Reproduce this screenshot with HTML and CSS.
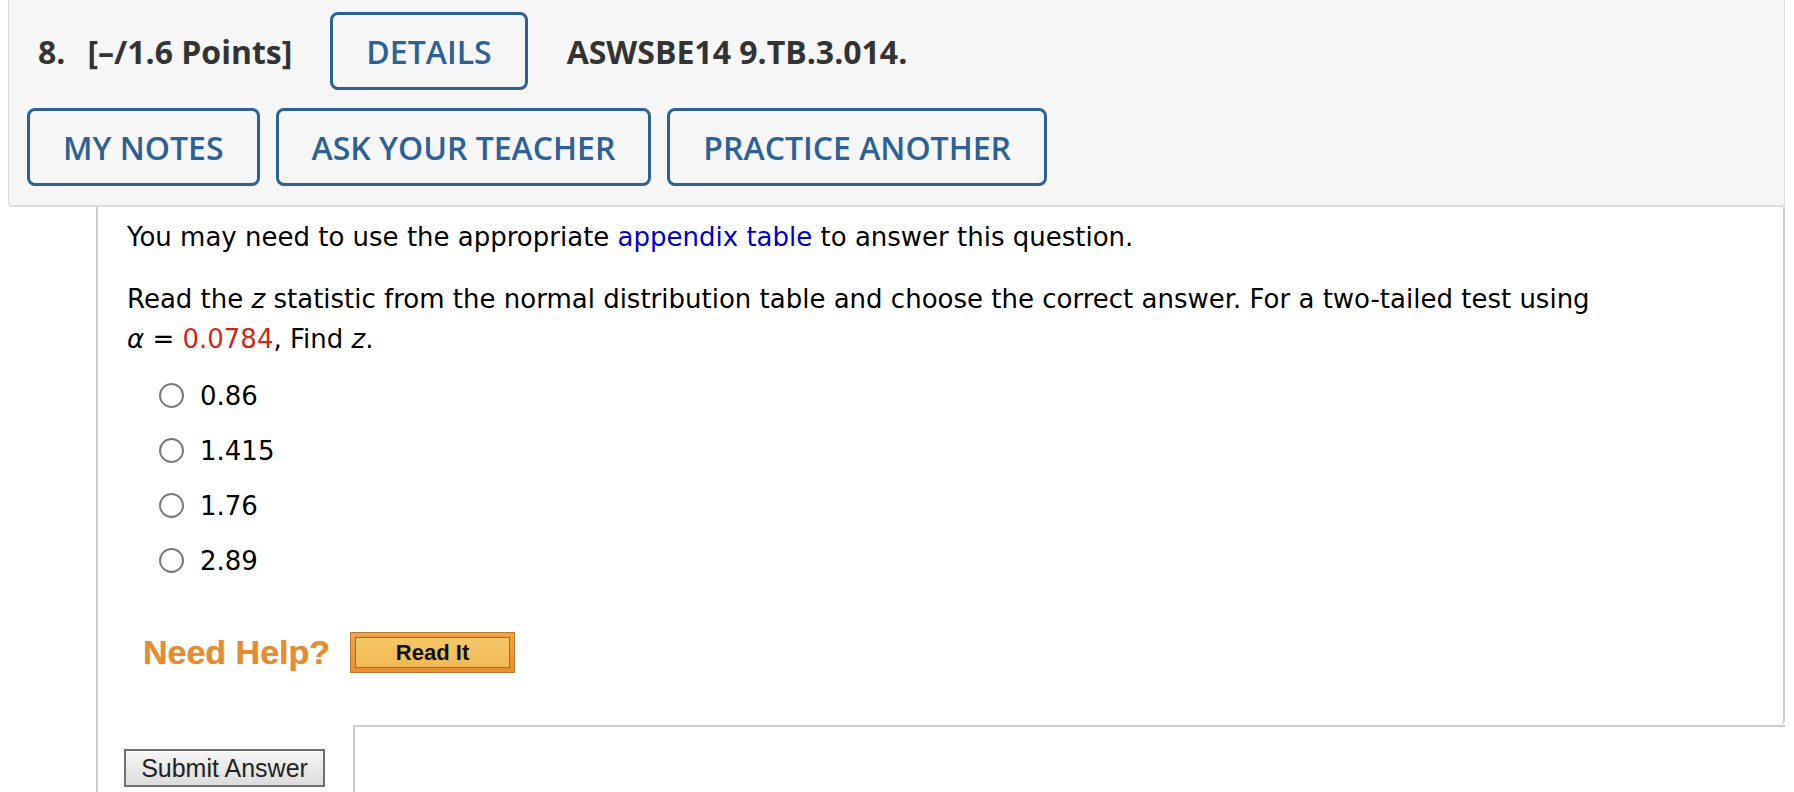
FILE: index.html
```html
<!DOCTYPE html>
<html lang="en">
<head>
    <meta charset="UTF-8">
    <meta name="viewport" content="width=device-width, initial-scale=1.0">
    <title>Question 8</title>
    <link rel="stylesheet" href="styles.css">
</head>
<body>

    <div class="qhead">
        <div class="row">
            <span class="qtitle"><span class="qnum">8.</span>[–/1.6 Points]</span>
            <button class="btn btn-details">DETAILS</button>
            <span class="qcode">ASWSBE14 9.TB.3.014.</span>
        </div>
        <div class="row">
            <button class="btn">MY NOTES</button>
            <button class="btn">ASK YOUR TEACHER</button>
            <button class="btn">PRACTICE ANOTHER</button>
        </div>
    </div>

    <div class="question">
        <div class="qmain">
            <p class="intro">You may need to use the appropriate <a href="#">appendix table</a> to answer this question.</p>
            <p class="ask">Read the <i>z</i> statistic from the normal distribution table and choose the correct answer. For a two-tailed test using<br>
                <i>α</i> = <span class="val">0.0784</span>, Find <i>z</i>.</p>

            <ul class="options">
                <li><span class="radio"></span>0.86</li>
                <li><span class="radio"></span>1.415</li>
                <li><span class="radio"></span>1.76</li>
                <li><span class="radio"></span>2.89</li>
            </ul>

            <div class="help">
                <span class="need">Need Help?</span>
                <span class="readit"><span>Read It</span></span>
            </div>
        </div>

        <div class="qfoot">
            <div class="submit-col">
                <button class="submit">Submit Answer</button>
            </div>
            <div class="answer-box"></div>
        </div>
    </div>

</body>
</html>
```

FILE: styles.css
```css
body {
    margin: 0;
    padding: 0;
    background: #fff;
    font-family: "DejaVu Sans", Verdana, sans-serif;
    overflow: hidden;
}

.qhead {
    margin: 0 9px 0 8px;
    padding: 12px 0 19px 18px;
    background-color: #f6f6f6;
    border: 1px solid #dcdcdc;
    border-top: none;
    border-bottom: 2px solid #dcdcdc;
    border-radius: 0 0 4px 4px;
}

.row {
    display: flex;
    align-items: center;
    gap: 16px;
}

.row + .row {
    margin-top: 18px;
}

.qtitle, .qcode {
    font-family: "Open Sans", sans-serif;
    font-weight: 700;
    font-size: 32px;
    color: #333;
}

.qtitle {
    margin-left: 11px;
    margin-right: 22px;
}

.qnum {
    margin-right: 22px;
}

.qcode {
    margin-left: 23px;
}

.btn {
    height: 78px;
    padding: 0 33px;
    background: transparent;
    border: 3px solid #2c6195;
    border-radius: 8px;
    color: #2c6195;
    font-family: "Open Sans", sans-serif;
    font-weight: 600;
    font-size: 32px;
    cursor: pointer;
}

.question {
    margin: 0 9px 0 96px;
    border-left: 2px solid #cccccc;
}

.qmain {
    padding: 10px 0 52px 29px;
    border-right: 2px solid #cccccc;
    border-bottom-right-radius: 5px;
    font-size: 26px;
    color: #000;
}

.qmain p {
    margin: 0;
    line-height: 40px;
}

.qmain .ask {
    margin-top: 22px;
}

.qmain a {
    color: #0000cc;
    text-decoration: none;
}

.val {
    color: #d0261d;
}

.options {
    list-style: none;
    margin: 9px 0 0 0;
    padding: 0 0 0 32px;
}

.options li {
    display: flex;
    align-items: center;
    height: 55px;
}

.radio {
    width: 21px;
    height: 21px;
    border: 2px solid #7a7a7a;
    border-radius: 50%;
    margin-right: 16px;
    background: #fff;
}

.help {
    display: flex;
    align-items: center;
    height: 41px;
    margin-top: 44px;
    padding-left: 16px;
}

.need {
    font-family: "Liberation Sans", Arial, sans-serif;
    font-weight: bold;
    font-size: 34px;
    color: #e58b30;
    text-shadow: 0 0 1px rgba(229, 139, 48, 0.7);
    margin-right: 20px;
}

.readit {
    display: inline-block;
    padding: 4px;
    background: linear-gradient(#f0a54a, #e48f32);
    border: 1px solid #b8782f;
}

.readit span {
    display: block;
    width: 153px;
    height: 29px;
    line-height: 29px;
    text-align: center;
    background: linear-gradient(#f6c868, #efb955);
    border: 1px solid #a06b2c;
    font-family: "Liberation Sans", Arial, sans-serif;
    font-weight: bold;
    font-size: 22px;
    color: #111;
}

.qfoot {
    display: flex;
}

.submit-col {
    width: 229px;
    padding: 24px 0 0 26px;
}

.submit {
    width: 201px;
    height: 38px;
    padding: 0;
    border: 2px solid #707070;
    background: linear-gradient(#f6f6f6, #dcdcdc);
    font-family: "Liberation Sans", Arial, sans-serif;
    font-size: 25px;
    color: #222;
}

.answer-box {
    flex: 1;
    min-height: 120px;
    border-left: 2px solid #cccccc;
    border-top: 2px solid #cccccc;
}
```
